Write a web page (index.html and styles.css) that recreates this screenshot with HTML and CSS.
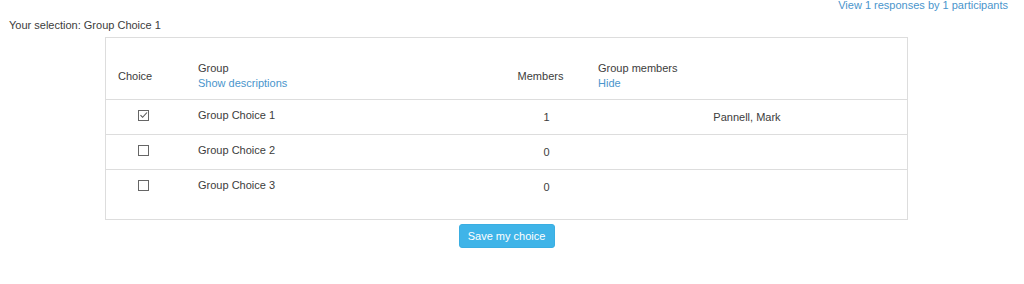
FILE: index.html
```html
<!DOCTYPE html>
<html>
<head>
<meta charset="utf-8">
<link rel="stylesheet" href="styles.css">
</head>
<body>
<div class="page">
  <div class="responses"><a href="#">View 1 responses by 1 participants</a></div>
  <div class="selection">Your selection: Group Choice 1</div>
  <div class="box">
    <div class="row head">
      <div class="c-choice">Choice</div>
      <div class="c-group">Group<br><a href="#">Show descriptions</a></div>
      <div class="c-members">Members</div>
      <div class="c-gm">Group members<br><a href="#">Hide</a></div>
    </div>
    <div class="row">
      <div class="c-choice"><span class="cb checked"><svg width="9" height="8" viewBox="0 0 9 8"><path d="M1.5 4.2 L3.6 6.3 L8 1.5" fill="none" stroke="#555" stroke-width="1.1"/></svg></span></div>
      <div class="c-group name">Group Choice 1</div>
      <div class="c-members">1</div>
      <div class="c-gm">Pannell, Mark</div>
    </div>
    <div class="row">
      <div class="c-choice"><span class="cb"></span></div>
      <div class="c-group name">Group Choice 2</div>
      <div class="c-members">0</div>
      <div class="c-gm"></div>
    </div>
    <div class="row last">
      <div class="c-choice"><span class="cb"></span></div>
      <div class="c-group name">Group Choice 3</div>
      <div class="c-members">0</div>
      <div class="c-gm"></div>
    </div>
  </div>
  <div class="actions"><button class="save">Save my choice</button></div>
</div>
</body>
</html>
```
FILE: styles.css
```css
html, body {
  margin: 0;
  padding: 0;
  background: #fff;
}
body {
  font-family: "Liberation Sans", Arial, sans-serif;
  font-size: 11px;
  line-height: 15px;
  color: #3c3c3c;
}
a {
  color: #4a95cc;
  text-decoration: none;
}
.page {
  width: 1024px;
}
.responses {
  text-align: right;
  padding-right: 16px;
  margin-top: -2px;
  height: 18px;
}
.selection {
  padding-left: 9px;
  padding-top: 2px;
  height: 19px;
}
.box {
  margin-left: 105px;
  width: 801px;
  border: 1px solid #ddd;
  padding-bottom: 15px;
}
.row {
  display: grid;
  grid-template-columns: 80px 320px 81px 320px;
  height: 34px;
  border-bottom: 1px solid #ddd;
  align-items: center;
}
.row.last {
  border-bottom: none;
}
.row.head {
  height: 61px;
  align-items: end;
}
.row > div {
  padding: 0 12px;
}
.row > .c-choice {
  display: flex;
  justify-content: center;
  padding-bottom: 3px;
}
.row > .name {
  padding-bottom: 4px;
}
.row.head > div {
  padding: 0 12px 8px;
}
.row.head > .c-choice {
  display: block;
  padding-bottom: 15px;
}
.row.head > .c-members {
  text-align: center;
  padding: 0 12px 15px 0;
}
.row.head > .c-gm {
  text-align: left;
  padding-left: 11px;
}
.c-members {
  text-align: center;
}
.c-gm {
  text-align: center;
}
.cb {
  display: inline-block;
  width: 9px;
  height: 9px;
  border: 1px solid #666;
  margin-left: -5px;
  position: relative;
}
.cb svg {
  position: absolute;
  left: 0;
  top: 0;
}
.actions {
  width: 803px;
  margin-left: 105px;
  display: flex;
  justify-content: center;
  padding-top: 4px;
}
.save {
  font-family: "Liberation Sans", Arial, sans-serif;
  font-size: 11px;
  color: #fff;
  background: #3fb4e8;
  border: 1px solid #3aaee2;
  border-radius: 3px;
  width: 96px;
  height: 24px;
  padding: 0;
}
```
